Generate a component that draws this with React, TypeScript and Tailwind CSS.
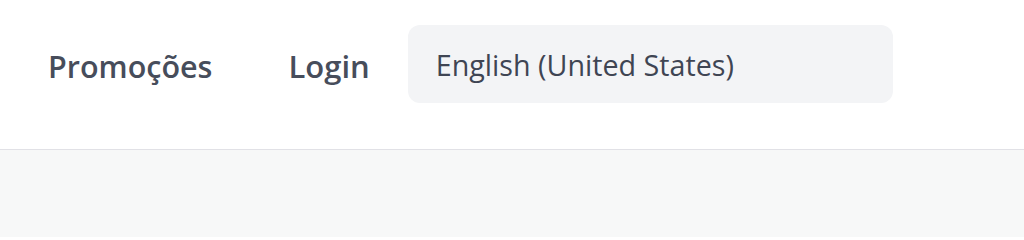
export default function App() {
  return (
    <div className="min-h-[237px] bg-[#f7f8f8] font-['Open_Sans',sans-serif]">
      <header className="h-[150px] bg-white border-b border-[#e1e1e6]">
        <nav className="flex items-center pt-[25px] pl-[48px]">
          <a className="mt-[4px] text-[30.5px] font-semibold text-[#474d5b] leading-none">
            Promoções
          </a>
          <a className="ml-[76px] mt-[4px] text-[31px] font-semibold text-[#474d5b] leading-none">
            Login
          </a>
          <div className="ml-[38px] flex h-[78px] w-[485px] items-center rounded-[12px] bg-[#f3f4f6] px-[28px]">
            <span className="mt-[2px] text-[28.7px] text-[#3f4553]">English (United States)</span>
          </div>
        </nav>
      </header>
    </div>
  );
}
